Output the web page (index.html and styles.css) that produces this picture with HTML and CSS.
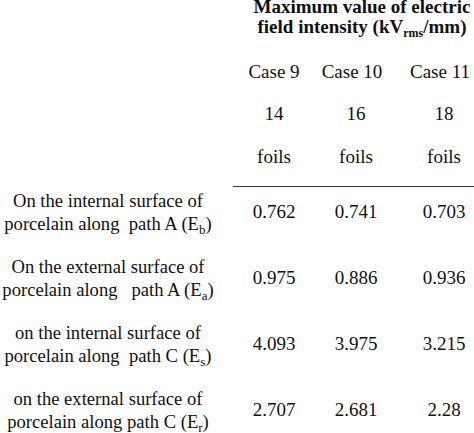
FILE: index.html
```html
<!DOCTYPE html>
<html lang="en">
<head>
	<meta charset="UTF-8">
	<title>Maximum value of electric field intensity</title>
	<link rel="stylesheet" href="styles.css">
</head>
<body>
	<div class="figure">
		<table class="results">
			<colgroup>
				<col class="col-label">
				<col class="col-case">
				<col class="col-case">
				<col class="col-case-last">
			</colgroup>
			<thead>
				<tr class="title-row">
					<th></th>
					<th colspan="3" class="title">Maximum value of electric<br>field intensity (kV<sub>rms</sub>/mm)</th>
				</tr>
				<tr class="case-row">
					<td></td>
					<td>Case 9</td>
					<td class="shift">Case 10</td>
					<td class="shift">Case 11</td>
				</tr>
				<tr class="count-row">
					<td></td>
					<td>14</td>
					<td>16</td>
					<td>18</td>
				</tr>
				<tr class="unit-row">
					<td></td>
					<td>foils</td>
					<td>foils</td>
					<td>foils</td>
				</tr>
			</thead>
			<tbody>
				<tr class="first">
					<td class="label">On the internal surface of<br>porcelain along&nbsp; path A (E<sub>b</sub>)</td>
					<td class="value">0.762</td>
					<td class="value">0.741</td>
					<td class="value">0.703</td>
				</tr>
				<tr>
					<td class="label">On the external surface of<br>porcelain along&nbsp;&nbsp; path A (E<sub>a</sub>)</td>
					<td class="value">0.975</td>
					<td class="value">0.886</td>
					<td class="value">0.936</td>
				</tr>
				<tr>
					<td class="label">on the internal surface of<br>porcelain along&nbsp; path C (E<sub>s</sub>)</td>
					<td class="value">4.093</td>
					<td class="value">3.975</td>
					<td class="value">3.215</td>
				</tr>
				<tr>
					<td class="label">on the external surface of<br>porcelain along path C (E<sub>r</sub>)</td>
					<td class="value">2.707</td>
					<td class="value">2.681</td>
					<td class="value">2.28</td>
				</tr>
			</tbody>
		</table>
	</div>
</body>
</html>
```

FILE: styles.css
```css
*{
	padding: 0;
	margin: 0;
}
html,body{
	background: #fff;
	overflow: hidden;
}
.figure{
	width: 474px;
	height: 433px;
	overflow: hidden;
	font-family: "Liberation Serif", "Times New Roman", serif;
	font-size: 19px;
	color: #111;
}
.results{
	width: 491px;
	margin-top: -3px;
	border-collapse: collapse;
	border-spacing: 0;
	table-layout: fixed;
}
.results .col-label{
	width: 233px;
}
.results .col-case{
	width: 82px;
}
.results .col-case-last{
	width: 94px;
}
.results td,.results th{
	padding: 0;
	text-align: center;
	white-space: nowrap;
	line-height: 23px;
}
.results sub{
	font-size: 13px;
	line-height: 0;
	vertical-align: -4px;
}
.results .title sub{
	font-size: 12px;
}
.results .title{
	font-weight: bold;
	line-height: 20px;
	padding-bottom: 23px;
}
.results .case-row td{
	padding-bottom: 19px;
}
.results .case-row .shift{
	padding-right: 8px;
}
.results .count-row td{
	padding-bottom: 20px;
}
.results .unit-row td{
	padding-bottom: 18px;
}
.results tbody td{
	padding-bottom: 20px;
	vertical-align: middle;
}
.results tbody .label{
	padding-right: 17px;
	font-size: 18.6px;
}
.results tbody .first .value{
	border-top: 1px solid #3a3a3a;
}
.results tbody .first td{
	padding-top: 2px;
}
```
